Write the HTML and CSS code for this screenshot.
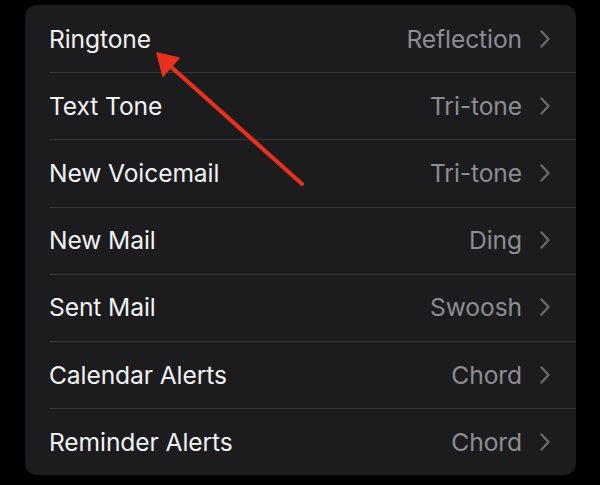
FILE: index.html
```html
<!DOCTYPE html>
<html lang="en">
<head>
    <meta charset="UTF-8">
    <meta name="viewport" content="width=device-width, initial-scale=1.0">
    <title>Sounds</title>
    <link rel="stylesheet" href="styles.css">
</head>
<body>
    <div class="screen">
        <div class="list">
            <div class="row">
                <span class="label">Ringtone</span>
                <span class="value">Reflection</span>
                <svg class="chevron" viewBox="0 0 10 18"><path d="M1.5 1.5 L8.5 9 L1.5 16.5"/></svg>
            </div>
            <div class="row">
                <span class="label">Text Tone</span>
                <span class="value">Tri-tone</span>
                <svg class="chevron" viewBox="0 0 10 18"><path d="M1.5 1.5 L8.5 9 L1.5 16.5"/></svg>
            </div>
            <div class="row">
                <span class="label">New Voicemail</span>
                <span class="value">Tri-tone</span>
                <svg class="chevron" viewBox="0 0 10 18"><path d="M1.5 1.5 L8.5 9 L1.5 16.5"/></svg>
            </div>
            <div class="row">
                <span class="label">New Mail</span>
                <span class="value">Ding</span>
                <svg class="chevron" viewBox="0 0 10 18"><path d="M1.5 1.5 L8.5 9 L1.5 16.5"/></svg>
            </div>
            <div class="row">
                <span class="label">Sent Mail</span>
                <span class="value">Swoosh</span>
                <svg class="chevron" viewBox="0 0 10 18"><path d="M1.5 1.5 L8.5 9 L1.5 16.5"/></svg>
            </div>
            <div class="row">
                <span class="label">Calendar Alerts</span>
                <span class="value">Chord</span>
                <svg class="chevron" viewBox="0 0 10 18"><path d="M1.5 1.5 L8.5 9 L1.5 16.5"/></svg>
            </div>
            <div class="row">
                <span class="label">Reminder Alerts</span>
                <span class="value">Chord</span>
                <svg class="chevron" viewBox="0 0 10 18"><path d="M1.5 1.5 L8.5 9 L1.5 16.5"/></svg>
            </div>
        </div>

        <!-- annotation arrow pointing at Ringtone -->
        <svg class="arrow" viewBox="0 0 600 485">
            <line x1="302" y1="184" x2="168" y2="64"/>
            <polygon points="157,53 179,58 163,76"/>
        </svg>
    </div>
</body>
</html>
```

FILE: styles.css
```css
* {
    margin: 0;
    padding: 0;
    box-sizing: border-box;
}

body {
    background: #000;
    font-family: Inter, "Liberation Sans", sans-serif;
    width: 600px;
    height: 485px;
    overflow: hidden;
}

.screen {
    position: relative;
    width: 600px;
    height: 485px;
    padding: 5px 24px 0 25px;
}

.list {
    background: #1c1c1e;
    border-radius: 12px;
    overflow: hidden;
}

.row {
    display: flex;
    align-items: center;
    height: 67.2px;
    padding-left: 24px;
    padding-right: 26px;
    position: relative;
}

.row + .row::before {
    content: "";
    position: absolute;
    top: 0;
    left: 24px;
    right: 0;
    height: 1px;
    background: #353538;
}

.label {
    flex: 1;
    color: #f2f2f4;
    font-size: 24.6px;
    letter-spacing: -0.1px;
}

.value {
    color: #8d8d92;
    font-size: 24.6px;
    letter-spacing: -0.1px;
    margin-right: 18px;
}

.chevron {
    width: 10px;
    height: 18px;
    fill: none;
    stroke: #69696d;
    stroke-width: 2.4;
    stroke-linecap: round;
    stroke-linejoin: round;
}

.arrow {
    position: absolute;
    top: 0;
    left: 0;
    width: 600px;
    height: 485px;
    pointer-events: none;
}

.arrow line {
    stroke: #e8311d;
    stroke-width: 4;
    stroke-linecap: round;
}

.arrow polygon {
    fill: #e8311d;
    stroke: #e8311d;
    stroke-width: 1.5;
    stroke-linejoin: round;
}
```
